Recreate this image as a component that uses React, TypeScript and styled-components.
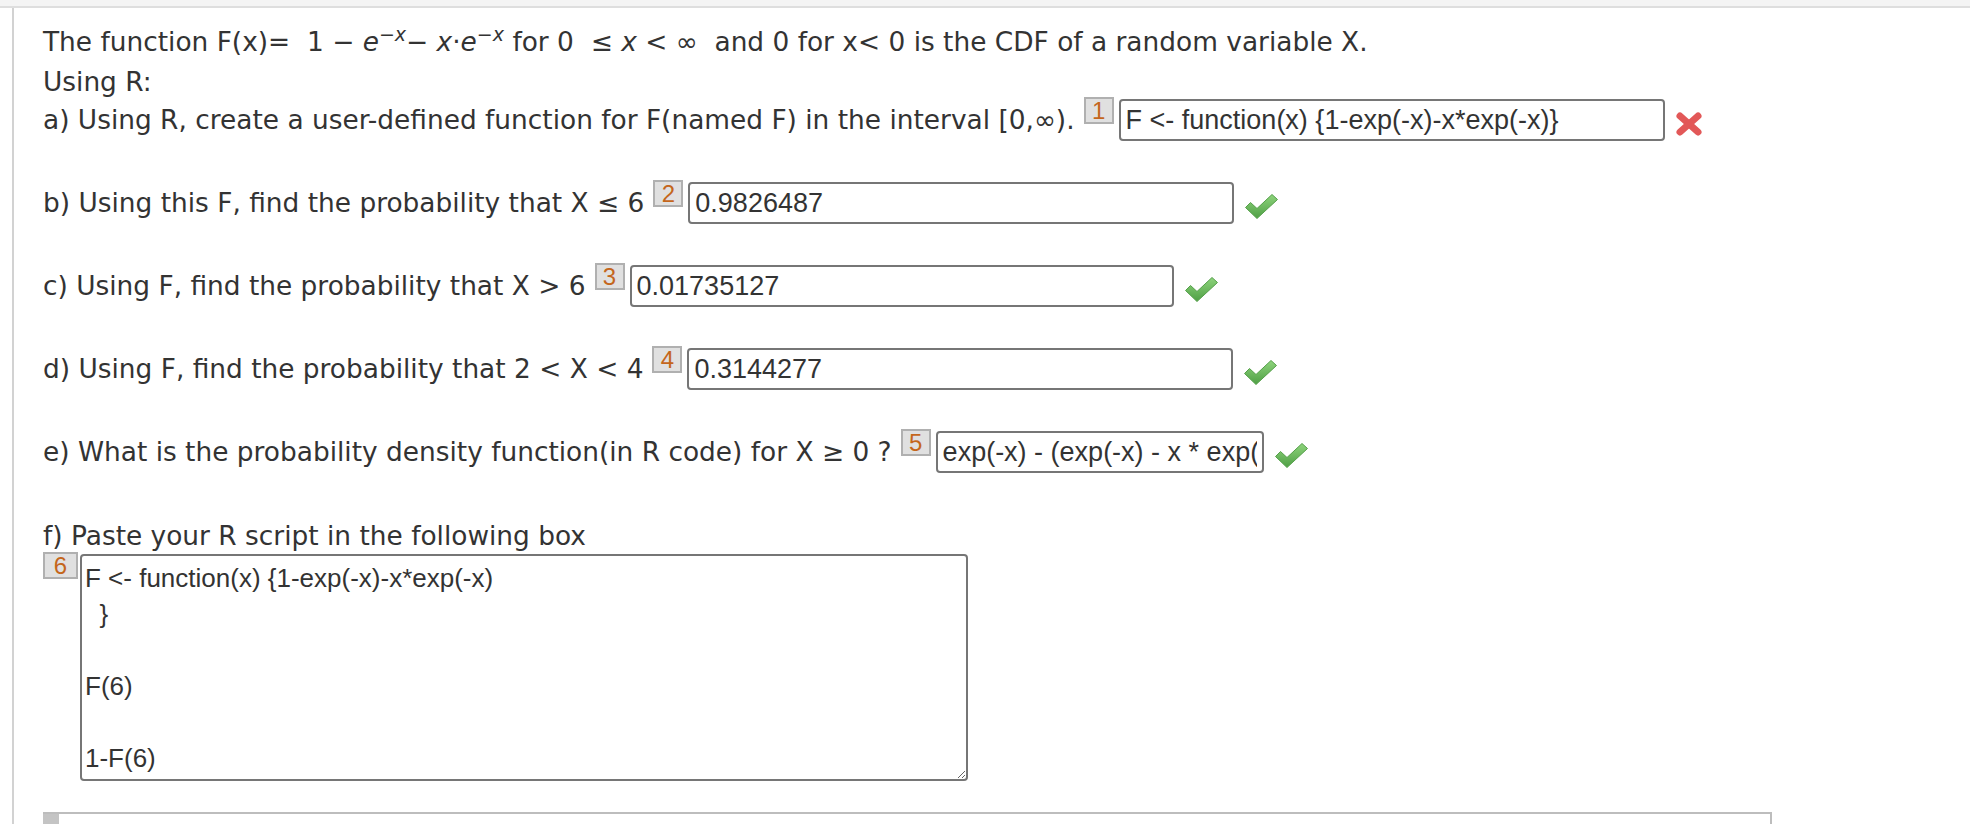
import React from "react";
import styled, { createGlobalStyle } from "styled-components";

const TEXT_COLOR = "#333333";
const FIELD_BORDER = "#767676";
const QUESTION_FONT = `"DejaVu Sans", Verdana, sans-serif`;
const FIELD_FONT = `"Liberation Sans", Arial, sans-serif`;

const GlobalStyle = createGlobalStyle`
  html, body {
    margin: 0;
    padding: 0;
    width: 1970px;
    height: 824px;
    overflow: hidden;
    background: #ffffff;
  }
`;

const Page = styled.div`
  width: 1970px;
  height: 824px;
  display: flex;
  flex-direction: column;
  background: #ffffff;
`;

const TopStrip = styled.div`
  height: 6px;
  flex-shrink: 0;
  background: #f4f4f4;
  border-bottom: 2px solid #dedede;
`;

const Frame = styled.div`
  flex: 1;
  margin-left: 12px;
  border-left: 2px solid #d2d2d2;
  padding: 14px 0 0 29px;
  overflow: hidden;
  display: flex;
  flex-direction: column;
  font-family: ${QUESTION_FONT};
  font-size: 26.4px;
  color: ${TEXT_COLOR};
`;

const Intro = styled.div`
  display: flex;
  flex-direction: column;
`;

const Line = styled.div<{ $height: number }>`
  height: ${({ $height }) => $height}px;
  line-height: 40px;
  white-space: pre;
`;

const Em = styled.i`
  font-style: oblique;
`;

const Sup = styled.sup`
  font-size: 19px;
  line-height: 0;
  vertical-align: 10px;
`;

const Rows = styled.div`
  display: flex;
  flex-direction: column;
  gap: 41px;
`;

const Row = styled.div`
  display: flex;
  align-items: center;
  height: 42px;
`;

const Label = styled.span`
  line-height: 40px;
  white-space: pre;
`;

const Badge = styled.span<{ $wide?: boolean }>`
  box-sizing: border-box;
  align-self: flex-start;
  margin: -2px 0 0 ${({ $wide }) => ($wide ? "0" : "9px")};
  width: ${({ $wide }) => ($wide ? "35px" : "30px")};
  height: 27px;
  padding-top: 1px;
  background: #e0e0e0;
  border: 2px solid #b0b0b0;
  color: #c4661c;
  font-family: ${FIELD_FONT};
  font-size: 24px;
  line-height: 21px;
  text-align: center;
`;

const Field = styled.input<{ $width: number }>`
  box-sizing: border-box;
  margin: 0 0 0 5px;
  width: ${({ $width }) => $width}px;
  height: 42px;
  padding: 0 5px;
  border: 2px solid ${FIELD_BORDER};
  border-radius: 4px;
  background: #ffffff;
  color: ${TEXT_COLOR};
  font-family: ${FIELD_FONT};
  font-size: 27px;
  outline: none;
`;

const Mark = styled.svg`
  flex-shrink: 0;
  margin: 7px 0 0 10px;
`;

const ScriptLabel = styled.div`
  margin-top: 45px;
  height: 36px;
  line-height: 36px;
  white-space: pre;
`;

const ScriptRow = styled.div`
  display: flex;
  align-items: flex-start;
  gap: 2px;
`;

const ScriptArea = styled.textarea`
  box-sizing: border-box;
  margin: 0;
  width: 888px;
  height: 227px;
  padding: 4px 3px;
  border: 2px solid ${FIELD_BORDER};
  border-radius: 4px;
  color: ${TEXT_COLOR};
  font-family: ${FIELD_FONT};
  font-size: 26px;
  line-height: 36px;
  overflow: hidden;
  outline: none;
  resize: both;
`;

const NextCard = styled.div`
  box-sizing: border-box;
  margin-top: 31px;
  width: 1729px;
  height: 60px;
  flex-shrink: 0;
  border-top: 2px solid #bdbdbd;
  border-right: 2px solid #bdbdbd;
  display: flex;
`;

const Marker = styled.div`
  width: 16px;
  background: #c4c4c4;
`;

function CheckIcon() {
  return (
    <Mark width="35" height="27" viewBox="0 0 35 27">
      <defs>
        <linearGradient id="tick" x1="0" y1="0" x2="0" y2="1">
          <stop offset="0" stopColor="#8ed47c" />
          <stop offset="1" stopColor="#4f9f45" />
        </linearGradient>
      </defs>
      <path
        d="M1.5 14.5 L6.5 9.5 L13 15.5 L28 1.5 L33.5 6.5 L13 25.5 Z"
        fill="url(#tick)"
        stroke="#55a04a"
        strokeWidth="1"
        strokeLinejoin="round"
      />
    </Mark>
  );
}

function CrossIcon() {
  return (
    <Mark width="28" height="26" viewBox="0 0 28 26">
      <g stroke="#e25858" strokeWidth="7" strokeLinecap="round">
        <line x1="5" y1="5" x2="23" y2="21" />
        <line x1="23" y1="5" x2="5" y2="21" />
      </g>
    </Mark>
  );
}

interface Answer {
  label: string;
  value: string;
  width: number;
  correct: boolean;
}

const answers: Answer[] = [
  {
    label: "a) Using R, create a user-defined function for F(named F) in the interval [0,∞).",
    value: "F <- function(x) {1-exp(-x)-x*exp(-x)}",
    width: 546,
    correct: false,
  },
  {
    label: "b) Using this F, find the probability that X ≤ 6",
    value: "0.9826487",
    width: 546,
    correct: true,
  },
  {
    label: "c) Using F, find the probability that X > 6",
    value: "0.01735127",
    width: 544,
    correct: true,
  },
  {
    label: "d) Using F, find the probability that 2 < X < 4",
    value: "0.3144277",
    width: 546,
    correct: true,
  },
  {
    label: "e) What is the probability density function(in R code) for X ≥ 0 ?",
    value: "exp(-x) - (exp(-x) - x * exp(-x))",
    width: 328,
    correct: true,
  },
];

const script = "F <- function(x) {1-exp(-x)-x*exp(-x)\n  }\n\nF(6)\n\n1-F(6)";

export default function App() {
  return (
    <>
      <GlobalStyle />
      <Page>
        <TopStrip />
        <Frame>
          <Intro>
            <Line $height={40}>
              The function F(x)={"  "}1 − <Em>e</Em>
              <Sup>
                −<Em>x</Em>
              </Sup>
              − <Em>x</Em>·<Em>e</Em>
              <Sup>
                −<Em>x</Em>
              </Sup>{" "}
              for 0 {" "}≤ <Em>x</Em> &lt; ∞{"  "}and 0 for x&lt; 0 is the CDF of a random variable X.
            </Line>
            <Line $height={37}>Using R:</Line>
          </Intro>
          <Rows>
            {answers.map((a, i) => (
              <Row key={i}>
                <Label>{a.label}</Label>
                <Badge>{i + 1}</Badge>
                <Field $width={a.width} readOnly value={a.value} />
                {a.correct ? <CheckIcon /> : <CrossIcon />}
              </Row>
            ))}
          </Rows>
          <ScriptLabel>f) Paste your R script in the following box</ScriptLabel>
          <ScriptRow>
            <Badge $wide>6</Badge>
            <ScriptArea readOnly value={script} />
          </ScriptRow>
          <NextCard>
            <Marker />
          </NextCard>
        </Frame>
      </Page>
    </>
  );
}
